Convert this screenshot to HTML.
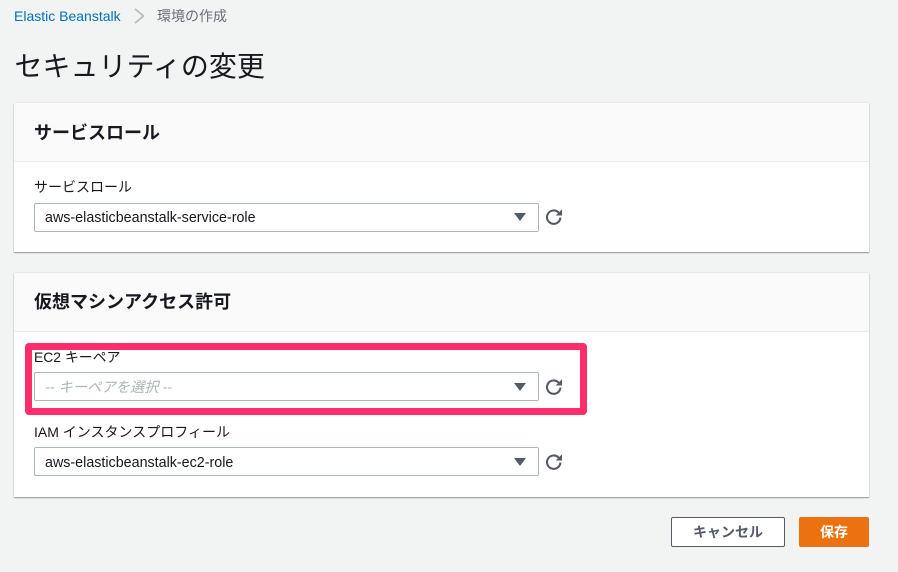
<!DOCTYPE html>
<html lang="ja">
<head>
<meta charset="utf-8">
<title>セキュリティの変更</title>
<style>
html,body{margin:0;padding:0}
body{width:898px;height:572px;position:relative;overflow:hidden;background:#f2f3f3;font-family:"Liberation Sans","Noto Sans CJK JP",sans-serif;color:#16191f}
.a{position:absolute;white-space:nowrap}
.panel{position:absolute;left:14px;width:855px;background:#fff;box-shadow:0 1px 1px 0 rgba(0,28,36,.4),0 0 1px 0 rgba(0,28,36,.2)}
.phead{position:absolute;left:0;top:0;width:855px;height:58px;background:#fafafa;border-bottom:1px solid #eaeded}
.ptitle{position:absolute;left:20px;top:17px;font-size:18px;line-height:25px;font-weight:700;white-space:nowrap;color:#16191f}
.label{position:absolute;left:34px;font-size:14px;line-height:18px;white-space:nowrap;color:#16191f}
.sel{position:absolute;left:34px;width:503px;height:27px;background:#fff;border:1px solid #aab7b8;border-radius:2px;font-size:14.3px;line-height:29px;text-indent:10px;color:#16191f;overflow:hidden}
.ph{color:#aab7b8;font-style:italic}
.arrow{position:absolute;left:514px;width:0;height:0;border-left:6px solid transparent;border-right:6px solid transparent;border-top:8px solid #545b64}
.ref{position:absolute;left:545px;width:18px;height:18px}
</style>
</head>
<body>
<div class="a" style="left:14px;top:8px;font-size:14px;line-height:16px;color:#0073bb">Elastic Beanstalk</div>
<svg class="a" style="left:133px;top:8px" width="13" height="16" viewBox="0 0 13 16"><path d="M2 1l8.5 7-8.5 7" fill="none" stroke="#aab7b8" stroke-width="1.5"/></svg>
<div class="a" style="left:157px;top:8px;font-size:14px;line-height:16px;color:#687078">環境の作成</div>
<div class="a" style="left:14.5px;top:49px;font-size:28px;line-height:36px;color:#16191f">セキュリティの変更</div>

<div class="panel" style="top:103px;height:149px"><div class="phead"></div><div class="ptitle" style="top:18px">サービスロール</div></div>
<div class="label" style="top:178px">サービスロール</div>
<div class="sel" style="top:203px">aws-elasticbeanstalk-service-role</div>
<div class="arrow" style="top:213px"></div>
<svg class="ref" style="top:208px" viewBox="0 0 18 18"><path d="M13.6 4.6A6.7 6.7 0 1 0 15.4 9.6" fill="none" stroke="#545b64" stroke-width="2.1"/><path d="M17 1.2v6.3h-6.3z" fill="#545b64"/></svg>

<div class="panel" style="top:273px;height:224px"><div class="phead"></div><div class="ptitle">仮想マシンアクセス許可</div></div>
<div class="label" style="top:348px;font-size:13.9px">EC2 キーペア</div>
<div class="sel ph" style="top:372px;line-height:31px">-- キーペアを選択 --</div>
<div class="arrow" style="top:383px"></div>
<svg class="ref" style="top:378px" viewBox="0 0 18 18"><path d="M13.6 4.6A6.7 6.7 0 1 0 15.4 9.6" fill="none" stroke="#545b64" stroke-width="2.1"/><path d="M17 1.2v6.3h-6.3z" fill="#545b64"/></svg>
<div class="label" style="top:423px">IAM インスタンスプロフィール</div>
<div class="sel" style="top:447px;line-height:31px">aws-elasticbeanstalk-ec2-role</div>
<div class="arrow" style="top:458px"></div>
<svg class="ref" style="top:453px" viewBox="0 0 18 18"><path d="M13.6 4.6A6.7 6.7 0 1 0 15.4 9.6" fill="none" stroke="#545b64" stroke-width="2.1"/><path d="M17 1.2v6.3h-6.3z" fill="#545b64"/></svg>

<div class="a" style="left:25px;top:343px;width:548px;height:58px;border:7px solid #ff2d6b;border-radius:4px"></div>

<div class="a" style="left:671px;top:517px;width:112px;height:28px;border:1px solid #545b64;border-radius:2px;background:#fff;color:#545b64;font-size:14px;font-weight:700;line-height:28px;text-align:center">キャンセル</div>
<div class="a" style="left:799px;top:517px;width:70px;height:30px;border-radius:2px;background:#ec7211;color:#fff;font-size:14px;font-weight:700;line-height:30px;text-align:center">保存</div>
</body>
</html>
